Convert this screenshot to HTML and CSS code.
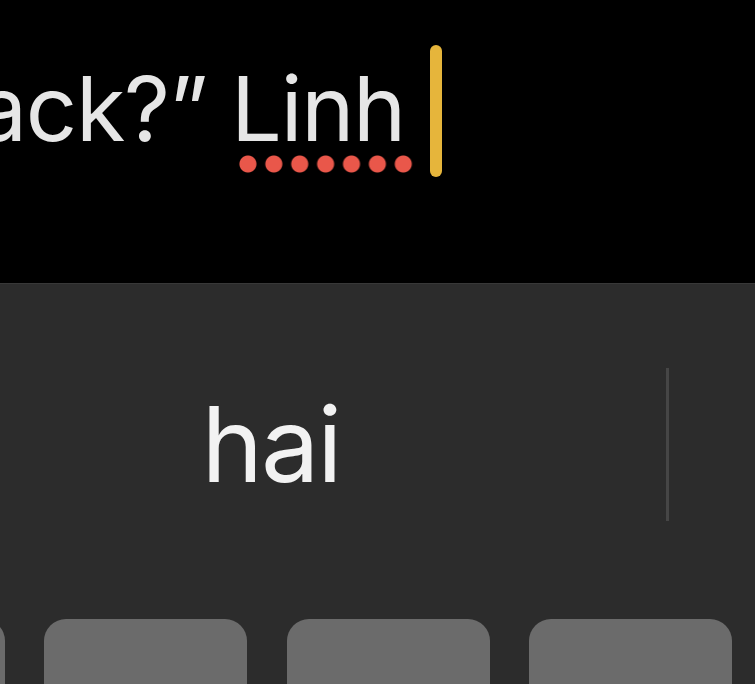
FILE: index.html
```html
<!DOCTYPE html>
<html lang="en">
<head>
<meta charset="utf-8">
<title>Keyboard</title>
<link rel="stylesheet" href="styles.css">
</head>
<body>
<div class="screen">
  <div class="field">
    <div class="text"><span class="typed">“When will you be back?” <span class="misspelled">Linh</span></span></div>
    <div class="caret"></div>
  </div>
  <div class="kb">
    <div class="suggest">
      <div class="word">hai</div>
      <div class="divider"></div>
    </div>
    <div class="keys">
      <div class="key"></div>
      <div class="key"></div>
      <div class="key"></div>
      <div class="key"></div>
    </div>
  </div>
</div>
</body>
</html>
```
FILE: styles.css
```css
html, body {
  margin: 0;
  padding: 0;
  background: #000;
}
.screen {
  width: 755px;
  height: 684px;
  overflow: hidden;
  font-family: Inter, "Noto Sans", sans-serif;
  display: flex;
  flex-direction: column;
}
.field {
  flex: 0 0 auto;
  height: 238px;
  padding-top: 45px;
  display: flex;
  align-items: flex-start;
  background: #000;
}
.text {
  box-sizing: border-box;
  flex: 0 0 416px;
  display: flex;
  justify-content: flex-end;
  overflow: hidden;
  white-space: nowrap;
  margin-top: 9px;
  padding-right: 11px;
  padding-bottom: 20px;
}
.typed {
  font-size: 90px;
  line-height: 110px;
  color: #e6e6e6;
  letter-spacing: -1.3px;
}
.misspelled {
  position: relative;
}
.misspelled::after {
  content: "";
  position: absolute;
  left: 4px;
  width: 181px;
  top: 101px;
  height: 18px;
  background: radial-gradient(circle, #e9574a 8px, transparent 9px) left top / 25.9px 18px repeat-x;
}
.caret {
  flex: 0 0 12px;
  margin-left: 14px;
  height: 132px;
  border-radius: 6px;
  background: #e6b53b;
}
.kb {
  flex: 1 1 auto;
  min-height: 0;
  overflow: hidden;
  background: #2c2c2c;
  border-top: 1px solid #383838;
}
.suggest {
  display: flex;
  align-items: center;
  padding-top: 84px;
  height: 153px;
}
.word {
  flex: 0 0 542px;
  text-align: center;
  font-size: 104px;
  line-height: 153px;
  color: #f2f2f2;
  letter-spacing: -2px;
}
.divider {
  flex: 0 0 3px;
  height: 153px;
  margin-left: 124px;
  background: #464646;
}
.keys {
  margin-top: 98px;
  display: flex;
  justify-content: flex-end;
  gap: 39.5px;
  padding-right: 23px;
  overflow: hidden;
}
.key {
  flex: 0 0 203px;
  height: 120px;
  border-radius: 22px;
  background: #6b6b6b;
}
```
